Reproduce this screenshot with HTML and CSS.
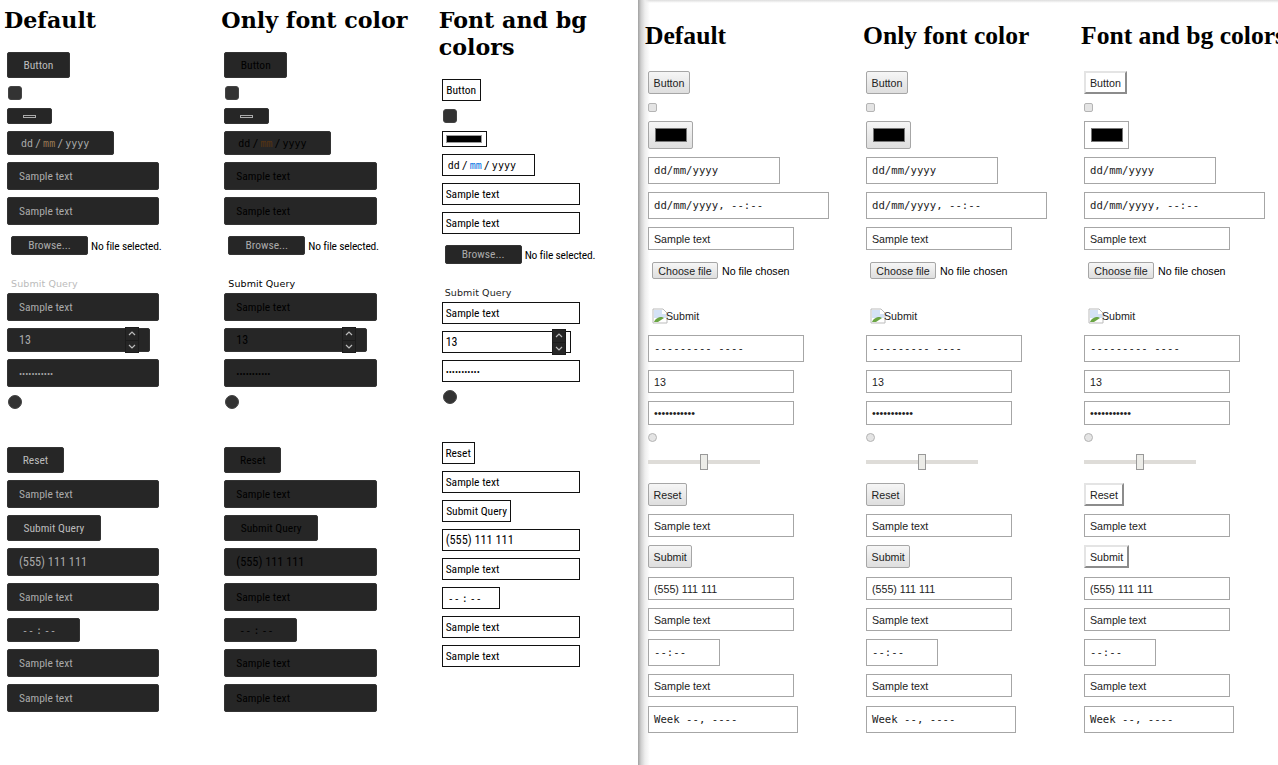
FILE: index.html
```html
<!DOCTYPE html>
<html lang="en">
<head>
  <meta charset="UTF-8">
  <title>Input styling test</title>
  <link rel="stylesheet" href="styles.css">
</head>
<body>
  <div class="panel themed">
    <div class="col default">
      <h1>Default</h1>
      <div class="stack">
        <div class="ctl btn">Button</div>
        <div class="ctl check"></div>
        <div class="ctl color"><span class="swatch"></span></div>
        <div class="ctl mono date"><span>dd / <span class="seg">mm</span> / yyyy</span></div>
        <div class="ctl text">Sample text</div>
        <div class="ctl text">Sample text</div>
        <div class="file"><span class="ctl browse">Browse...</span><span class="file-name">No file selected.</span></div>
        <div class="image-input">Submit Query</div>
        <div class="ctl text">Sample text</div>
        <div class="ctl number">13<span class="spin"><span class="spin-up"><svg width="8" height="5" viewBox="0 0 8 5"><path d="M1 4l3-3 3 3" /></svg></span><span class="spin-down"><svg width="8" height="5" viewBox="0 0 8 5"><path d="M1 1l3 3 3-3" /></svg></span></span></div>
        <div class="ctl text dots">•••••••••••</div>
        <div class="ctl radio"></div>
        <div class="range-gap"></div>
        <div class="ctl btn reset">Reset</div>
        <div class="ctl text">Sample text</div>
        <div class="ctl btn">Submit Query</div>
        <div class="ctl text tel">(555) 111 111</div>
        <div class="ctl text">Sample text</div>
        <div class="ctl mono time">-- : --</div>
        <div class="ctl text">Sample text</div>
        <div class="ctl text">Sample text</div>
      </div>
    </div>
    <div class="col fontonly">
      <h1>Only font color</h1>
      <div class="stack">
        <div class="ctl btn">Button</div>
        <div class="ctl check"></div>
        <div class="ctl color"><span class="swatch"></span></div>
        <div class="ctl mono date"><span>dd / <span class="seg">mm</span> / yyyy</span></div>
        <div class="ctl text">Sample text</div>
        <div class="ctl text">Sample text</div>
        <div class="file"><span class="ctl browse">Browse...</span><span class="file-name">No file selected.</span></div>
        <div class="image-input">Submit Query</div>
        <div class="ctl text">Sample text</div>
        <div class="ctl number">13<span class="spin"><span class="spin-up"><svg width="8" height="5" viewBox="0 0 8 5"><path d="M1 4l3-3 3 3" /></svg></span><span class="spin-down"><svg width="8" height="5" viewBox="0 0 8 5"><path d="M1 1l3 3 3-3" /></svg></span></span></div>
        <div class="ctl text dots">•••••••••••</div>
        <div class="ctl radio"></div>
        <div class="range-gap"></div>
        <div class="ctl btn reset">Reset</div>
        <div class="ctl text">Sample text</div>
        <div class="ctl btn">Submit Query</div>
        <div class="ctl text tel">(555) 111 111</div>
        <div class="ctl text">Sample text</div>
        <div class="ctl mono time">-- : --</div>
        <div class="ctl text">Sample text</div>
        <div class="ctl text">Sample text</div>
      </div>
    </div>
    <div class="col both">
      <h1>Font and bg colors</h1>
      <div class="stack">
        <div class="ctl btn">Button</div>
        <div class="ctl check"></div>
        <div class="ctl color"><span class="swatch"></span></div>
        <div class="ctl mono date"><span>dd / <span class="seg">mm</span> / yyyy</span></div>
        <div class="ctl text">Sample text</div>
        <div class="ctl text">Sample text</div>
        <div class="file"><span class="ctl browse">Browse...</span><span class="file-name">No file selected.</span></div>
        <div class="image-input">Submit Query</div>
        <div class="ctl text">Sample text</div>
        <div class="ctl number">13<span class="spin"><span class="spin-up"><svg width="8" height="5" viewBox="0 0 8 5"><path d="M1 4l3-3 3 3" /></svg></span><span class="spin-down"><svg width="8" height="5" viewBox="0 0 8 5"><path d="M1 1l3 3 3-3" /></svg></span></span></div>
        <div class="ctl text dots">•••••••••••</div>
        <div class="ctl radio"></div>
        <div class="range-gap"></div>
        <div class="ctl btn reset">Reset</div>
        <div class="ctl text">Sample text</div>
        <div class="ctl btn">Submit Query</div>
        <div class="ctl text tel">(555) 111 111</div>
        <div class="ctl text">Sample text</div>
        <div class="ctl mono time">-- : --</div>
        <div class="ctl text">Sample text</div>
        <div class="ctl text">Sample text</div>
      </div>
    </div>
  </div>

  <div class="panel native">
    <div class="col">
      <h1>Default</h1>
      <div class="stack">
        <div class="ctl btn">Button</div>
        <div class="ctl check"></div>
        <div class="ctl color"><span class="swatch"></span></div>
        <div class="ctl mono date">dd/mm/yyyy</div>
        <div class="ctl mono datetime">dd/mm/yyyy, --:--</div>
        <div class="ctl text">Sample text</div>
        <div class="file"><span class="ctl browse">Choose file</span><span>No file chosen</span></div>
        <div class="image-input"><svg class="broken" width="16" height="16" viewBox="0 0 16 16"><path d="M1 1h10l4 4v10H1z" fill="#fff" stroke="#bbb" /><path d="M2 2h8v4h4v4H2z" fill="#d4e2f6" /><path d="M2 14c1-3 4-5 8-5l2 1-6 4z" fill="#6aa544" /></svg><span>Submit</span></div>
        <div class="ctl mono month">--------- ----</div>
        <div class="ctl text">13</div>
        <div class="ctl text dots">•••••••••••</div>
        <div class="ctl radio"></div>
        <div class="range"><span class="thumb"></span></div>
        <div class="ctl btn">Reset</div>
        <div class="ctl text">Sample text</div>
        <div class="ctl btn submit">Submit</div>
        <div class="ctl text">(555) 111 111</div>
        <div class="ctl text">Sample text</div>
        <div class="ctl mono time">--:--</div>
        <div class="ctl text">Sample text</div>
        <div class="ctl mono week">Week --, ----</div>
      </div>
    </div>
    <div class="col">
      <h1>Only font color</h1>
      <div class="stack">
        <div class="ctl btn">Button</div>
        <div class="ctl check"></div>
        <div class="ctl color"><span class="swatch"></span></div>
        <div class="ctl mono date">dd/mm/yyyy</div>
        <div class="ctl mono datetime">dd/mm/yyyy, --:--</div>
        <div class="ctl text">Sample text</div>
        <div class="file"><span class="ctl browse">Choose file</span><span>No file chosen</span></div>
        <div class="image-input"><svg class="broken" width="16" height="16" viewBox="0 0 16 16"><path d="M1 1h10l4 4v10H1z" fill="#fff" stroke="#bbb" /><path d="M2 2h8v4h4v4H2z" fill="#d4e2f6" /><path d="M2 14c1-3 4-5 8-5l2 1-6 4z" fill="#6aa544" /></svg><span>Submit</span></div>
        <div class="ctl mono month">--------- ----</div>
        <div class="ctl text">13</div>
        <div class="ctl text dots">•••••••••••</div>
        <div class="ctl radio"></div>
        <div class="range"><span class="thumb"></span></div>
        <div class="ctl btn">Reset</div>
        <div class="ctl text">Sample text</div>
        <div class="ctl btn submit">Submit</div>
        <div class="ctl text">(555) 111 111</div>
        <div class="ctl text">Sample text</div>
        <div class="ctl mono time">--:--</div>
        <div class="ctl text">Sample text</div>
        <div class="ctl mono week">Week --, ----</div>
      </div>
    </div>
    <div class="col both">
      <h1>Font and bg colors</h1>
      <div class="stack">
        <div class="ctl btn">Button</div>
        <div class="ctl check"></div>
        <div class="ctl color"><span class="swatch"></span></div>
        <div class="ctl mono date">dd/mm/yyyy</div>
        <div class="ctl mono datetime">dd/mm/yyyy, --:--</div>
        <div class="ctl text">Sample text</div>
        <div class="file"><span class="ctl browse">Choose file</span><span>No file chosen</span></div>
        <div class="image-input"><svg class="broken" width="16" height="16" viewBox="0 0 16 16"><path d="M1 1h10l4 4v10H1z" fill="#fff" stroke="#bbb" /><path d="M2 2h8v4h4v4H2z" fill="#d4e2f6" /><path d="M2 14c1-3 4-5 8-5l2 1-6 4z" fill="#6aa544" /></svg><span>Submit</span></div>
        <div class="ctl mono month">--------- ----</div>
        <div class="ctl text">13</div>
        <div class="ctl text dots">•••••••••••</div>
        <div class="ctl radio"></div>
        <div class="range"><span class="thumb"></span></div>
        <div class="ctl btn">Reset</div>
        <div class="ctl text">Sample text</div>
        <div class="ctl btn submit">Submit</div>
        <div class="ctl text">(555) 111 111</div>
        <div class="ctl text">Sample text</div>
        <div class="ctl mono time">--:--</div>
        <div class="ctl text">Sample text</div>
        <div class="ctl mono week">Week --, ----</div>
      </div>
    </div>
  </div>
</body>
</html>
```

FILE: styles.css
```css
html, body {
  margin: 0;
  height: 100%;
  overflow: hidden;
  background: #fff;
}
body {
  display: flex;
  width: 1278px;
  height: 765px;
  color: #000;
}
.panel {
  display: grid;
  align-items: start;
  height: 765px;
  box-sizing: border-box;
}
.stack {
  display: flex;
  flex-direction: column;
  align-items: flex-start;
  padding-left: 3px;
}
.ctl {
  display: flex;
  align-items: center;
  box-sizing: border-box;
  position: relative;
  white-space: nowrap;
}
.mono {
  font-family: "DejaVu Sans Mono", monospace;
}

/* left half: the themed controls */
.themed {
  flex: 0 0 638px;
  min-width: 0;
  padding-left: 4px;
  grid-template-columns: repeat(3, 217.33px);
  font-family: Roboto, sans-serif;
  font-size: 11.5px;
  font-stretch: 85%;
}
.themed h1 {
  margin: 0 0 18px;
  padding-top: 7px;
  font: bold 22.2px/27px "DejaVu Serif", serif;
}
.themed .stack {
  gap: 7px;
}
.themed .ctl {
  background: #262626;
  border: 1px solid #333;
  border-radius: 2px;
  color: #aaa;
}
.themed .btn {
  justify-content: center;
  height: 26px;
  padding: 0 15.5px;
  color: #bbb;
}
.themed .reset {
  width: 57px;
  padding: 0;
}
.themed .check,
.themed .radio {
  width: 14px;
  height: 14px;
  margin: 1px 0 1px 1px;
  background: #333;
  border: 1px solid #444;
  border-radius: 3px;
}
.themed .radio {
  border-radius: 50%;
}
.themed .color {
  width: 45px;
  height: 16px;
  justify-content: center;
}
.themed .swatch {
  width: 11px;
  height: 1px;
  background: #262626;
  border: 1px solid #aaa;
}
.themed .date {
  width: 107px;
  height: 24px;
  padding-left: 13px;
  font-size: 10px;
  word-spacing: -4px;
}
.themed .seg {
  color: #9a7a55;
}
.themed .text {
  width: 152.4px;
  height: 28px;
  padding-left: 11px;
}
.themed .tel {
  font-size: 12.3px;
}
.themed .dots {
  font-size: 9.2px;
}
.themed .file {
  display: flex;
  align-items: center;
  gap: 3px;
  margin: 4px 0 0 4px;
}
.themed .browse {
  width: 77px;
  height: 19px;
  padding-bottom: 1px;
  justify-content: center;
}
.file-name {
  letter-spacing: -0.2px;
}
.themed .image-input {
  height: 13px;
  margin: 15px 0 -4px 4px;
  font: 9.5px/13px "DejaVu Sans", sans-serif;
  letter-spacing: 0.1px;
  color: #bbb;
}
.themed .number {
  width: 143px;
  height: 24px;
  padding-left: 11px;
  font-size: 12px;
}
.spin {
  position: absolute;
  top: 50%;
  right: 10px;
  display: flex;
  flex-direction: column;
  width: 14px;
  height: 26px;
  margin-top: -13px;
  box-sizing: border-box;
  background: #262626;
  border: 1px solid #1c1c1c;
}
.spin-up,
.spin-down {
  display: flex;
  flex: 1;
  align-items: center;
  justify-content: center;
}
.spin-up {
  border-bottom: 1px solid #1c1c1c;
}
.spin path {
  fill: none;
  stroke: #bbb;
  stroke-width: 1.2;
}
.themed .time {
  width: 73px;
  height: 24px;
  padding-left: 14px;
  font-size: 10px;
  word-spacing: -4px;
}
.range-gap {
  height: 23px;
}

/* middle column: only the font colour is set */
.themed .fontonly .ctl,
.themed .fontonly .image-input {
  color: #000;
}
.themed .fontonly .seg {
  color: #5a3512;
}
.themed .fontonly .browse {
  color: #aaa;
}

/* third column: font and background set, the box loses its theme */
.themed .both .ctl {
  background: #fff;
  border: 1px solid #111;
  border-radius: 0;
  color: #000;
}
.themed .both .btn {
  height: 22px;
  padding: 0 3.5px;
}
.themed .both .reset {
  width: 33px;
  padding: 0;
}
.themed .both .check,
.themed .both .radio {
  background: #333;
  border: 1px solid #444;
  border-radius: 3px;
}
.themed .both .radio {
  border-radius: 50%;
}
.themed .both .swatch {
  width: 34px;
  height: 6px;
  background: #000;
  border: 1px solid #999;
}
.themed .both .date {
  width: 93px;
  height: 22px;
  padding-left: 5px;
}
.themed .both .seg {
  color: #0070e0;
}
.themed .both .text {
  width: 138px;
  height: 22px;
  padding-left: 3px;
}
.themed .both .file {
  margin-left: 3px;
}
.themed .both .browse {
  background: #262626;
  border: 1px solid #333;
  border-radius: 2px;
  color: #aaa;
}
.themed .both .image-input {
  margin-left: 3px;
  color: #222;
}
.themed .both .number {
  width: 129px;
  height: 22px;
  padding-left: 3px;
}
.themed .both .spin {
  right: 4px;
}
.themed .both .time {
  width: 58px;
  height: 22px;
  padding-left: 5px;
}

/* right half: what the browser draws on its own */
.native {
  flex: 1;
  min-width: 0;
  overflow: hidden;
  padding-left: 7px;
  grid-template-columns: repeat(3, 218px);
  font-family: "Liberation Sans", Arial, sans-serif;
  font-size: 10.67px;
  background:
    linear-gradient(to right, #a0a0a0, #cfcfcf 3px, #eee 7px, rgba(255, 255, 255, 0) 12px),
    linear-gradient(to bottom, #ddd, #fff 3px);
}
.native h1 {
  margin: 0 0 21px;
  padding-top: 21px;
  font: bold 25.6px/30px "Liberation Serif", serif;
  white-space: nowrap;
}
.native .stack {
  gap: 8px;
}
.native .ctl {
  background: #fff;
  border: 1px solid #a6a6a6;
  color: #222;
}
.native .btn,
.native .browse,
.native .color {
  background: linear-gradient(#f6f6f6, #dedede);
  border-radius: 2px;
}
.native .btn {
  height: 23px;
  padding: 0 4.6px;
}
.native .btn:first-child {
  margin-top: -1px;
  margin-bottom: 1px;
}
.native .submit {
  margin-bottom: 1px;
}
.native .check,
.native .radio {
  width: 9px;
  height: 9px;
  background: #e4e4e4;
  border: 1px solid #b4b4b4;
  border-radius: 2px;
}
.native .check {
  margin-bottom: 1px;
}
.native .radio {
  border-radius: 50%;
}
.native .color {
  width: 45px;
  height: 28px;
  justify-content: center;
}
.native .swatch {
  width: 32px;
  height: 14px;
  background: #000;
  border: 1px solid #777;
  box-sizing: border-box;
}
.native .mono {
  height: 27px;
  padding-left: 5px;
  font-size: 10.67px;
}
.native .date {
  width: 132px;
}
.native .datetime {
  width: 181px;
}
.native .month {
  width: 156px;
}
.native .time {
  width: 72px;
}
.native .week {
  width: 150px;
  margin-top: 1px;
}
.native .text {
  width: 146px;
  height: 23px;
  padding-left: 5px;
}
.native .dots {
  height: 24px;
}
.native .file {
  display: flex;
  align-items: center;
  gap: 4px;
  margin: 4px 0 0 4px;
}
.native .browse {
  width: 66px;
  height: 17px;
  justify-content: center;
}
.native .image-input {
  display: flex;
  align-items: center;
  height: 16px;
  margin: 21px 0 3px 4px;
  color: #222;
}
.broken {
  margin-right: -2px;
}
.range {
  position: relative;
  width: 112px;
  height: 4px;
  margin: 10px 0 11px;
  background: #dedcd8;
}
.thumb {
  position: absolute;
  top: -6px;
  left: 52px;
  width: 8px;
  height: 16px;
  box-sizing: border-box;
  background: #ecece8;
  border: 1px solid #999;
}

/* third native column: a white button with the old outset edge */
.native .both .btn {
  background: #fff;
  border: 2px solid;
  border-color: #e4e4e4 #8c8c8c #8c8c8c #e4e4e4;
  border-radius: 0;
  padding: 0 4px;
}
.native .both .color {
  background: #fff;
  border-radius: 0;
}
```
